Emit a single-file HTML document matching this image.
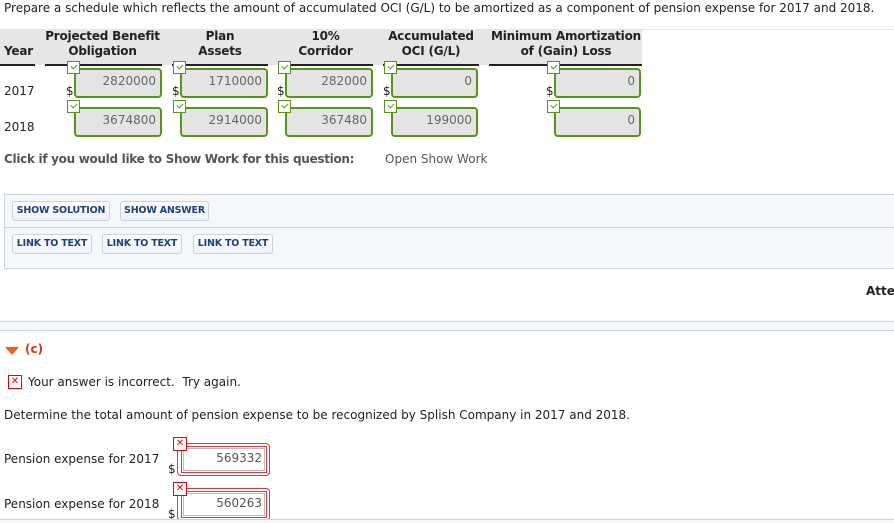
<!DOCTYPE html>
<html><head><meta charset="utf-8"><style>
*{margin:0;padding:0;box-sizing:border-box}
body{width:894px;height:523px;overflow:hidden;background:#fff;font-family:Verdana,"DejaVu Sans",sans-serif;font-size:12px;color:#222;position:relative}
.a{position:absolute;white-space:nowrap}
.hd{position:absolute;top:29px;left:0;width:642px;height:36px;background:#e6e6e6}
.hl{position:absolute;top:64px;height:2px;background:#222}
.th{position:absolute;font-weight:bold;text-align:center;line-height:15px;font-size:12px;color:#222;white-space:nowrap;letter-spacing:-0.2px}
.in{position:absolute;height:30px;border:2px solid #55961a;border-radius:4px;background:#e4e4e4;color:#666;text-align:right;padding:4px 4px 0 0;font-size:12px}
.ck{position:absolute;width:13px;height:13px;border:1.5px solid #55961a;background:#fff}
.ck:after{content:"";position:absolute;left:3px;top:2px;width:5px;height:3px;border-left:1.5px solid #55961a;border-bottom:1.5px solid #55961a;transform:rotate(-45deg)}
.btn{position:absolute;height:20px;border:1px solid #c7d3e0;border-radius:3px;background:linear-gradient(#fff,#eef2f7);color:#1f3f7a;font-weight:bold;font-size:9.5px;line-height:18px;text-align:center;white-space:nowrap;letter-spacing:-0.2px}
.xb{position:absolute;width:14px;height:14px;border:1.5px solid #e00;background:#fff;color:#e00;font-weight:bold;font-size:10px;line-height:11px;text-align:center}
.ro{position:absolute;border:1.5px solid #e33;border-radius:4px}
.ri{position:absolute;border:1px solid #e33;outline:1px solid #bbb;outline-offset:-3px;background:#fff;color:#555;text-align:right;padding:4px 4px 0 0}
</style></head><body>
<div class="a" style="left:4px;top:0px;line-height:16px">Prepare a schedule which reflects the amount of accumulated OCI (G/L) to be amortized as a component of pension expense for 2017 and 2018.</div>
<div style="position:absolute;left:0;top:29px;width:894px;height:1px;background:#e6e6e6"></div>
<div class="hd"></div>
<div class="th" style="left:4px;top:44px;text-align:left">Year</div>
<div class="th" style="left:40px;top:29px;width:125px">Projected Benefit<br>Obligation</div>
<div class="th" style="left:172px;top:29px;width:96px">Plan<br>Assets</div>
<div class="th" style="left:278px;top:29px;width:95px">10%<br>Corridor</div>
<div class="th" style="left:383px;top:29px;width:96px">Accumulated<br>OCI (G/L)</div>
<div class="th" style="left:486px;top:29px;width:160px">Minimum Amortization<br>of (Gain) Loss</div>
<div class="hl" style="left:0;width:35px"></div>
<div class="hl" style="left:45px;width:117px"></div>
<div class="hl" style="left:172px;width:96px"></div>
<div class="hl" style="left:278px;width:95px"></div>
<div class="hl" style="left:383px;width:96px"></div>
<div class="hl" style="left:489px;width:153px"></div>

<div class="a" style="left:4px;top:84px">2017</div>
<div class="a" style="left:4px;top:120px">2018</div>

<div class="a" style="left:66px;top:84px">$</div><div class="in" style="left:74px;top:68px;width:88px">2820000</div><div class="ck" style="left:67px;top:61px"></div>
<div class="a" style="left:172px;top:84px">$</div><div class="in" style="left:180px;top:68px;width:88px">1710000</div><div class="ck" style="left:173px;top:61px"></div>
<div class="a" style="left:277px;top:84px">$</div><div class="in" style="left:285px;top:68px;width:88px">282000</div><div class="ck" style="left:278px;top:61px"></div>
<div class="a" style="left:383px;top:84px">$</div><div class="in" style="left:391px;top:68px;width:87px">0</div><div class="ck" style="left:384px;top:61px"></div>
<div class="a" style="left:546px;top:84px">$</div><div class="in" style="left:554px;top:68px;width:87px">0</div><div class="ck" style="left:547px;top:61px"></div>

<div class="in" style="left:74px;top:107px;width:88px">3674800</div><div class="ck" style="left:67px;top:100px"></div>
<div class="in" style="left:180px;top:107px;width:88px">2914000</div><div class="ck" style="left:173px;top:100px"></div>
<div class="in" style="left:285px;top:107px;width:88px">367480</div><div class="ck" style="left:278px;top:100px"></div>
<div class="in" style="left:391px;top:107px;width:87px">199000</div><div class="ck" style="left:384px;top:100px"></div>
<div class="in" style="left:554px;top:107px;width:87px">0</div><div class="ck" style="left:547px;top:100px"></div>

<div class="a" style="left:4px;top:152px;font-weight:bold;color:#555;letter-spacing:-0.3px">Click if you would like to Show Work for this question:</div>
<div class="a" style="left:385px;top:152px;color:#555">Open Show Work</div>

<div style="position:absolute;left:4px;top:194px;width:892px;height:75px;background:#f5f8fb;border:1px solid #c9d5e3"></div>
<div style="position:absolute;left:5px;top:227px;width:890px;height:1px;background:#c9d5e3"></div>
<div class="btn" style="left:12px;top:201px;width:98px">SHOW SOLUTION</div>
<div class="btn" style="left:120px;top:201px;width:89px">SHOW ANSWER</div>
<div class="btn" style="left:12px;top:234px;width:80px">LINK TO TEXT</div>
<div class="btn" style="left:102px;top:234px;width:80px">LINK TO TEXT</div>
<div class="btn" style="left:193px;top:234px;width:80px">LINK TO TEXT</div>

<div class="a" style="left:866px;top:284px;font-weight:bold">Atte</div>
<div style="position:absolute;left:0;top:321px;width:894px;height:10px;background:#f5f8fb;border-top:1px solid #c9d5e3;border-bottom:1px solid #c9d5e3"></div>

<div style="position:absolute;left:5px;top:347px;width:0;height:0;border-left:7px solid transparent;border-right:7px solid transparent;border-top:8px solid #f06010"></div>
<div class="a" style="left:25px;top:342px;font-weight:bold;color:#d23c10">(c)</div>

<div class="xb" style="left:8px;top:375px">✕</div>
<div class="a" style="left:28px;top:375px">Your answer is incorrect.&nbsp; Try again.</div>
<div class="a" style="left:4px;top:408px">Determine the total amount of pension expense to be recognized by Splish Company in 2017 and 2018.</div>

<div class="a" style="left:4px;top:452px">Pension expense for 2017</div>
<div class="a" style="left:168px;top:462px">$</div>
<div class="ro" style="left:177px;top:443px;width:93px;height:33px"></div>
<div class="ri" style="left:181px;top:446px;width:86px;height:27px">569332</div>
<div class="xb" style="left:173px;top:437px">✕</div>

<div class="a" style="left:4px;top:497px">Pension expense for 2018</div>
<div class="a" style="left:168px;top:507px">$</div>
<div class="ro" style="left:177px;top:488px;width:93px;height:33px"></div>
<div class="ri" style="left:181px;top:491px;width:86px;height:27px">560263</div>
<div class="xb" style="left:173px;top:482px">✕</div>
<div style="position:absolute;left:0;top:519px;width:894px;height:4px;background:#f5f8fb;border-top:1px solid #c9d5e3"></div>
</body></html>
